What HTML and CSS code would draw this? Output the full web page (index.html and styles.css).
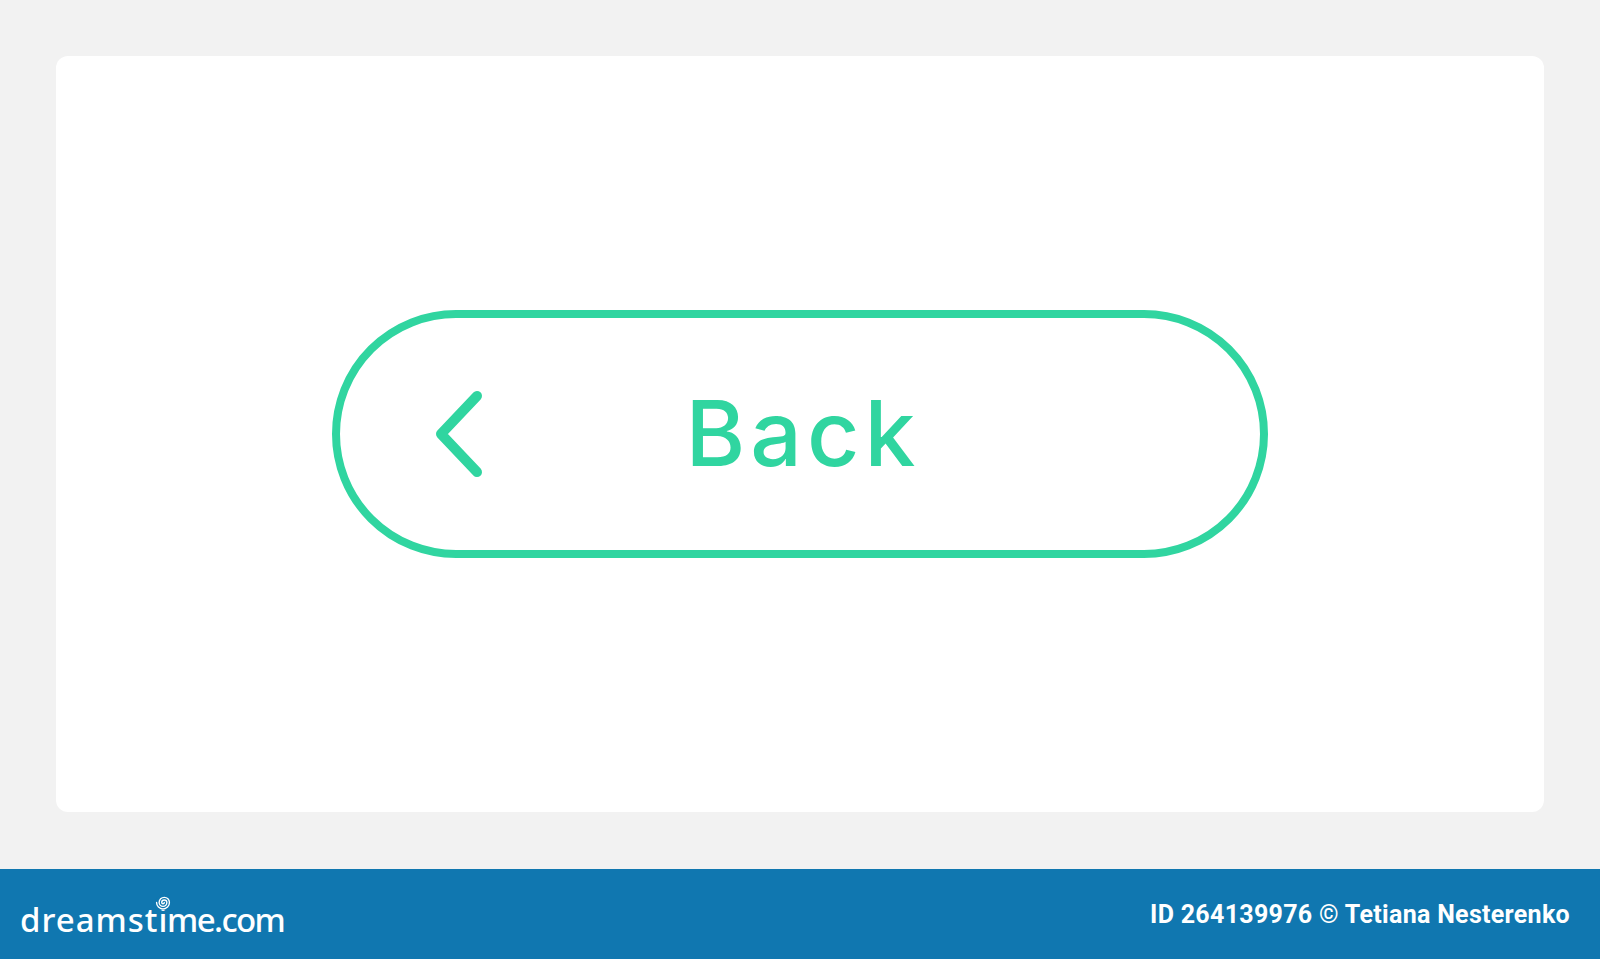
FILE: index.html
```html
<!DOCTYPE html>
<html lang="en">
<head>
<meta charset="utf-8">
<title>Back button</title>
<link rel="stylesheet" href="styles.css">
</head>
<body>
  <main class="canvas">
    <section class="card">
      <button class="back-btn" type="button">
        <span class="back-btn__icon">
          <svg width="56" height="92" viewBox="0 0 56 92" aria-hidden="true">
            <polyline points="47,8 11,46 47,84" fill="none" stroke="currentColor" stroke-width="10" stroke-linecap="round" stroke-linejoin="round"/>
          </svg>
        </span>
        <span class="back-btn__label">Back</span>
        <span class="back-btn__spacer"></span>
      </button>
    </section>
  </main>
  <footer class="credit-bar">
    <div class="brand"><span class="brand__lead">dreamst</span><span class="brand__i">i<svg class="brand__swirl" width="15" height="15" viewBox="0 0 14 14" aria-hidden="true"><circle cx="7" cy="7" r="7" fill="#1077b0"/><path d="M8.2 7 A1.2 1.2 0 0 1 5.8 7 A2.4 2.4 0 0 1 10.6 7 A3.6 3.6 0 0 1 3.4 7 A4.8 4.8 0 0 1 13 7 A6 6 0 0 1 1 7" fill="none" stroke="#ffffff" stroke-width="1.3" stroke-linecap="round"/></svg></span><span class="brand__tail">me.com</span></div>
    <div class="credit">ID 264139976 © Tetiana Nesterenko</div>
  </footer>
</body>
</html>
```
FILE: styles.css
```css
* {
  box-sizing: border-box;
}

html,
body {
  margin: 0;
  padding: 0;
}

body {
  width: 1600px;
  height: 959px;
  background: #f2f2f2;
  overflow: hidden;
  font-family: "Inter", "Liberation Sans", sans-serif;
}

.canvas {
  padding: 56px 56px 0;
}

.card {
  height: 756px;
  background: #ffffff;
  border-radius: 12px;
  display: flex;
  align-items: center;
  justify-content: center;
}

.back-btn {
  width: 936px;
  height: 248px;
  border: 8px solid #30d5a0;
  border-radius: 124px;
  background: #ffffff;
  color: #30d5a0;
  padding: 0;
  display: grid;
  grid-template-columns: 1fr auto 1fr;
  align-items: center;
  font: inherit;
  cursor: pointer;
}

.back-btn__icon {
  display: flex;
  padding-left: 90px;
}

.back-btn__label {
  font-family: "Inter", "DejaVu Sans", sans-serif;
  font-weight: 500;
  font-size: 91px;
  letter-spacing: 5px;
  line-height: 1;
  margin-left: 6px;
  margin-top: -1px;
}

.credit-bar {
  margin-top: 57px;
  height: 90px;
  background: #1077b0;
  color: #ffffff;
  display: flex;
  align-items: center;
  justify-content: space-between;
  padding: 0 30px 0 20px;
}

.brand {
  font-family: "Noto Sans", "DejaVu Sans", sans-serif;
  font-weight: 500;
  font-size: 33px;
  letter-spacing: -0.4px;
  margin-top: 11px;
}

.brand__lead {
  letter-spacing: 1px;
}

.brand__tail {
  letter-spacing: -1.6px;
}

.brand__i {
  position: relative;
}

.brand__swirl {
  position: absolute;
  left: 50%;
  top: -2px;
  transform: translateX(-50%);
}

.credit {
  font-family: "Roboto", "Liberation Sans", sans-serif;
  font-weight: 700;
  font-size: 25px;
  letter-spacing: 0.3px;
}
```
